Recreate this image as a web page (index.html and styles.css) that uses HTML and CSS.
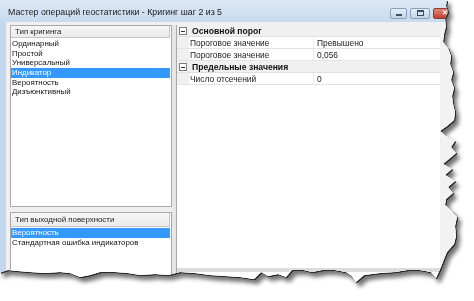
FILE: index.html
```html
<!DOCTYPE html>
<html lang="ru">
<head>
    <meta charset="UTF-8">
    <title>Мастер операций геостатистики</title>
    <link rel="stylesheet" href="styles.css">
</head>
<body>
    <div class="shot">
        <div class="tear">
            <div class="window">
                <div class="titlebar">
                    <span class="title">Мастер операций геостатистики - Кригинг шаг 2 из 5</span>
                    <div class="caption-btns">
                        <span class="cbtn min"><i></i></span>
                        <span class="cbtn max"><i></i></span>
                        <span class="cbtn close">✕</span>
                    </div>
                </div>
                <div class="client">
                    <div class="left">
                        <div class="listbox upper">
                            <div class="lhead">Тип кригинга</div>
                            <ul class="items">
                                <li>Ординарный</li>
                                <li>Простой</li>
                                <li>Универсальный</li>
                                <li class="sel">Индикатор</li>
                                <li>Вероятность</li>
                                <li>Дизъюнктивный</li>
                            </ul>
                        </div>
                        <div class="listbox lower">
                            <div class="lhead tall">Тип выходной поверхности</div>
                            <ul class="items">
                                <li class="sel">Вероятность</li>
                                <li>Стандартная ошибка индикаторов</li>
                            </ul>
                        </div>
                    </div>
                    <div class="splitter"></div>
                    <div class="grid">
                        <div class="row cat"><span class="toggle"></span><b>Основной порог</b></div>
                        <div class="row prop"><span class="name">Пороговое значение</span><span class="value">Превышено</span></div>
                        <div class="row prop"><span class="name">Пороговое значение</span><span class="value">0,056</span></div>
                        <div class="row cat"><span class="toggle"></span><b>Предельные значения</b></div>
                        <div class="row prop"><span class="name">Число отсечений</span><span class="value">0</span></div>
                        <div class="grid-fill"></div>
                    </div>
                    <div class="rframe"></div>
                </div>
            </div>
        </div>
    </div>
</body>
</html>
```

FILE: styles.css
```css
body {
    margin: 0;
    background: #fff;
    font-family: "Liberation Sans", Arial, sans-serif;
    color: #111;
}
.shot {
    width: 474px;
    height: 301px;
    overflow: hidden;
    background: #fff;
}
.tear {
    width: 470px;
    height: 292px;
    filter: drop-shadow(1px 1px 0 #2a2a2a) drop-shadow(3px 4px 2px rgba(0, 0, 0, 0.55));
}
.window {
    width: 460px;
    height: 290px;
    background: #c3d7ee;
    display: flex;
    flex-direction: column;
    clip-path: polygon(0 0, 447px 0, 446px 6px, 448px 12px, 445px 18px, 446px 26px, 444px 34px, 443px 42px, 448px 48px, 451px 56px, 450px 64px, 453px 72px, 451px 80px, 454px 88px, 452px 96px, 453px 104px, 455px 112px, 454px 120px, 447px 126px, 440px 131px, 446px 136px, 455px 141px, 451px 147px, 456px 153px, 449px 159px, 443px 164px, 452px 169px, 445px 175px, 455px 181px, 448px 187px, 453px 193px, 446px 199px, 445px 205px, 452px 211px, 457px 217px, 455px 226px, 456px 236px, 454px 244px, 447px 252px, 444px 259px, 441px 267px, 436px 278px, 431px 272px, 420px 270px, 407px 270px, 395px 272px, 380px 273px, 364px 275px, 356px 282px, 352px 276px, 346px 272px, 335px 270px, 322px 270px, 312px 272px, 304px 270px, 292px 270px, 286px 277px, 278px 274px, 268px 276px, 261px 272px, 254px 279px, 240px 277px, 225px 276px, 210px 275px, 195px 273px, 180px 272px, 168px 275px, 155px 274px, 140px 275px, 128px 273px, 115px 272px, 100px 272px, 90px 275px, 80px 277px, 70px 273px, 60px 272px, 45px 273px, 30px 272px, 18px 271px, 8px 270px, 0 273px);
}
.titlebar {
    height: 22px;
    display: flex;
    align-items: center;
    padding-left: 8px;
    background: linear-gradient(to bottom, #dce8f5, #c8daee);
}
.title {
    font-size: 8.8px;
    color: #1b1b1b;
    flex: 1;
    white-space: nowrap;
    margin-top: 2px;
}
.caption-btns {
    display: flex;
    gap: 3px;
    margin-right: 3px;
    margin-top: 4px;
}
.cbtn {
    height: 9px;
    border: 1px solid #8a9fbb;
    border-radius: 2px;
    background: linear-gradient(to bottom, #e4edf7, #c4d4e8);
    display: flex;
    justify-content: center;
    align-items: center;
}
.cbtn.min {
    width: 15px;
}
.cbtn.min i {
    width: 6px;
    height: 2px;
    background: #3c4f66;
    margin-top: 3px;
}
.cbtn.max {
    width: 18px;
}
.cbtn.max i {
    width: 5px;
    height: 3px;
    border: 1px solid #3c4f66;
    border-top-width: 2px;
}
.cbtn.close {
    width: 22px;
    border-color: #8c3a32;
    background: linear-gradient(to bottom, #e08878, #c2412f);
    color: #fff;
    font-size: 7px;
    font-weight: bold;
}
.client {
    flex: 1;
    margin-left: 6px;
    background: #f0f0f0;
    display: flex;
    padding-top: 3px;
}
.left {
    width: 162px;
    margin-left: 4px;
    display: flex;
    flex-direction: column;
    gap: 5px;
}
.listbox {
    background: #fff;
    border: 1px solid #a9a9a9;
    font-size: 7.9px;
}
.listbox.upper {
    height: 180px;
}
.listbox.lower {
    flex: 1;
}
.lhead {
    height: 11px;
    line-height: 12px;
    margin-right: 1px;
    padding-left: 4px;
    background: linear-gradient(to bottom, #f7f7f7, #ebebeb);
    border-bottom: 1px solid #c5c5c5;
    border-right: 1px solid #c5c5c5;
    color: #222;
}
.lhead.tall {
    height: 13px;
    line-height: 14px;
}
.items {
    list-style: none;
    margin: 1px 1px 0 0;
    padding: 0;
}
.items li {
    height: 9.7px;
    line-height: 10px;
    padding-left: 1px;
    white-space: nowrap;
}
.items li.sel {
    background: #3399ff;
    color: #fff;
}
.splitter {
    width: 4px;
    background: #e6e6e6;
    border-right: 1px solid #a8a8a8;
}
.grid {
    width: 263px;
    background: #fff;
    display: flex;
    flex-direction: column;
    font-size: 8.4px;
}
.row {
    height: 11px;
    line-height: 12px;
    display: flex;
    border-bottom: 1px solid #e4e4e4;
    white-space: nowrap;
}
.row.cat {
    background: #f0f0f0;
    border-bottom-color: #e0e0e0;
}
.row.cat b {
    font-size: 8.6px;
    padding-left: 5px;
}
.toggle {
    width: 6px;
    height: 6px;
    margin: 2px 0 0 2px;
    border: 1px solid #7d7d7d;
    background: #fff;
    position: relative;
}
.toggle::after {
    content: "";
    position: absolute;
    left: 1px;
    top: 2.5px;
    width: 4px;
    height: 1px;
    background: #333;
}
.row.prop {
    background: linear-gradient(to right, #f0f0f0 12px, #fff 12px);
}
.name {
    width: 123px;
    padding-left: 13px;
    border-right: 1px solid #ececec;
    color: #222;
}
.value {
    padding-left: 3px;
    color: #222;
}
.grid-fill {
    flex: 1;
    border-bottom: 4px solid #dcdcdc;
    margin-bottom: 18px;
}
.rframe {
    flex: 1;
    background: #f2f2f2;
}
```
